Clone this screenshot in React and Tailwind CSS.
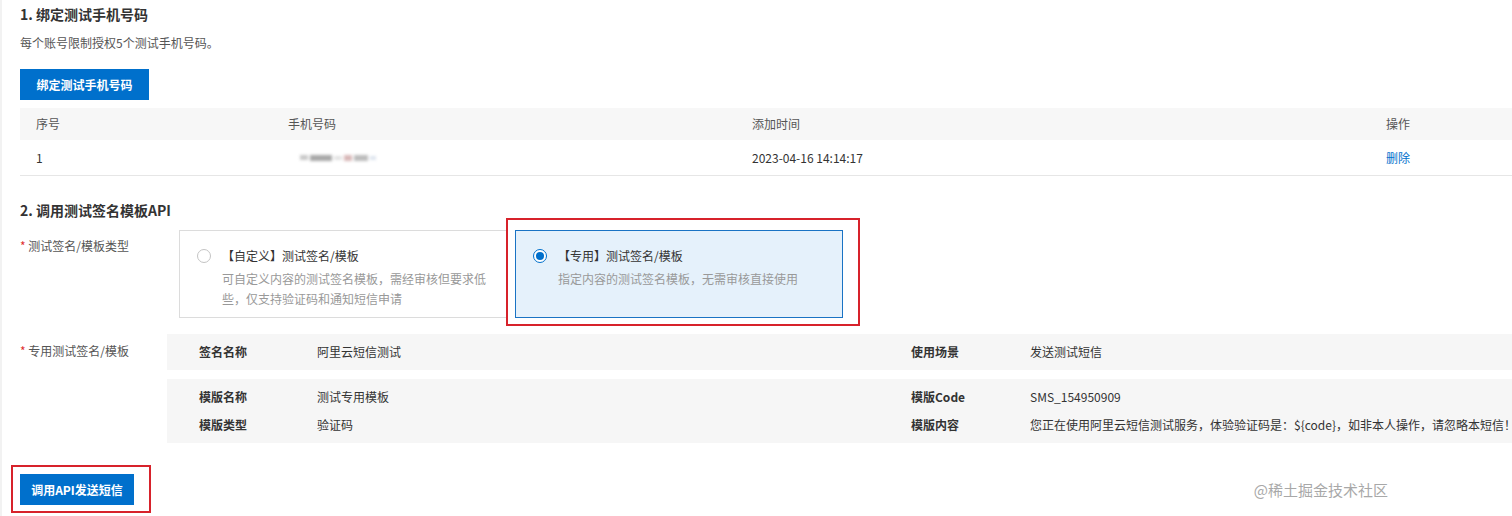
import React from "react";

const font = {
  fontFamily: '"Microsoft YaHei", "Noto Sans CJK SC", "Noto Sans", sans-serif',
};

const Radio = ({ checked }) =>
  checked ? (
    <span className="mt-[3px] flex h-[14px] w-[14px] shrink-0 items-center justify-center rounded-full border border-[#0070cc] bg-white">
      <span className="h-[8px] w-[8px] rounded-full bg-[#0070cc]" />
    </span>
  ) : (
    <span className="mt-[3px] h-[14px] w-[14px] shrink-0 rounded-full border border-[#c4c4c4] bg-white" />
  );

const InfoRow = ({ l1, v1, l2, v2 }) => (
  <div className="flex h-[28px] items-center">
    <div className="w-[118px] shrink-0 font-semibold text-[#333]">{l1}</div>
    <div className="w-[594px] shrink-0 text-[#333]">{v1}</div>
    <div className="w-[119px] shrink-0 font-semibold text-[#333]">{l2}</div>
    <div className="whitespace-nowrap text-[#333]">{v2}</div>
  </div>
);

export default function App() {
  return (
    <div
      className="relative h-[516px] w-[1512px] overflow-hidden border-l-2 border-[#f2f2f2] bg-white pl-[18px] text-[12px] text-[#333]"
      style={font}
    >
      {/* ---------- Section 1 ---------- */}
      <h3 className="pt-[4px] text-[14px] font-semibold leading-[20px] text-[#333]">
        1. 绑定测试手机号码
      </h3>
      <p className="mt-[10px] leading-[18px] text-[#555]">
        每个账号限制授权5个测试手机号码。
      </p>
      <button className="mt-[17px] h-[31px] w-[129px] bg-[#0070cc] text-[12px] font-semibold text-white">
        绑定测试手机号码
      </button>

      {/* table */}
      <div className="mt-[8px]">
        <div className="flex h-[32px] items-center bg-[#f7f7f7] text-[#555]">
          <div className="w-[252px] pl-[16px]">序号</div>
          <div className="w-[464px] pl-[16px]">手机号码</div>
          <div className="w-[634px] pl-[16px]">添加时间</div>
          <div className="pl-[16px]">操作</div>
        </div>
        <div className="flex h-[36px] items-center border-b border-[#e6e6e6]">
          <div className="w-[252px] pl-[16px]">1</div>
          <div className="w-[464px] pl-[28px]">
            <div className="flex items-center gap-[2px] blur-[1.5px]">
              <span className="h-[5px] w-[8px] bg-[#c8c8c8]" />
              <span className="h-[6px] w-[22px] bg-[#a8a8a8]" />
              <span className="h-[4px] w-[8px] bg-[#e2e2e2]" />
              <span className="h-[6px] w-[8px] bg-[#d8b8b8]" />
              <span className="h-[6px] w-[14px] bg-[#bcbcbc]" />
              <span className="h-[4px] w-[6px] bg-[#dde4ee]" />
            </div>
          </div>
          <div className="w-[634px] pl-[16px]">2023-04-16 14:14:17</div>
          <div className="pl-[16px] text-[#0070cc]">删除</div>
        </div>
      </div>

      {/* ---------- Section 2 ---------- */}
      <h3 className="mt-[24px] text-[14px] font-semibold leading-[20px] text-[#333]">
        2. 调用测试签名模板API
      </h3>

      <div className="mt-[10px] flex">
        <div className="w-[159px] shrink-0 pt-[7px] leading-[18px] text-[#555]">
          <span className="text-[#e0312f]">*</span> 测试签名/模板类型
        </div>
        <div className="flex h-[88px] w-[327px] gap-[11px] border border-r-0 border-[#dcdcdc] pl-[17px] pt-[15px]">
          <Radio />
          <div className="w-[270px]">
            <div className="leading-[20px] text-[#333]">【自定义】测试签名/模板</div>
            <div className="mt-[3px] leading-[20px] text-[#999]">
              可自定义内容的测试签名模板，需经审核但要求低些，仅支持验证码和通知短信申请
            </div>
          </div>
        </div>
        <div className="relative ml-[9px]">
          <div className="flex h-[88px] w-[328px] gap-[11px] border border-[#1a73c4] bg-[#e5f1fb] pl-[17px] pt-[15px]">
            <Radio checked />
            <div>
              <div className="leading-[20px] text-[#333]">【专用】测试签名/模板</div>
              <div className="mt-[3px] leading-[20px] text-[#999]">
                指定内容的测试签名模板，无需审核直接使用
              </div>
            </div>
          </div>
          <div className="pointer-events-none absolute -bottom-[8px] -left-[9px] -right-[17px] -top-[12px] border-2 border-[#d7222b]" />
        </div>
      </div>

      <div className="mt-[16px] flex">
        <div className="w-[147px] shrink-0 pt-[8px] leading-[18px] text-[#555]">
          <span className="text-[#e0312f]">*</span> 专用测试签名/模板
        </div>
        <div className="min-w-0 flex-1">
          <div className="bg-[#f6f6f6] py-[4px] pl-[32px]">
            <InfoRow l1="签名名称" v1="阿里云短信测试" l2="使用场景" v2="发送测试短信" />
          </div>
          <div className="mt-[9px] bg-[#f6f6f6] py-[4px] pl-[32px]">
            <InfoRow l1="模版名称" v1="测试专用模板" l2="模版Code" v2="SMS_154950909" />
            <InfoRow
              l1="模版类型"
              v1="验证码"
              l2="模版内容"
              v2="您正在使用阿里云短信测试服务，体验验证码是：${code}，如非本人操作，请忽略本短信！"
            />
          </div>
        </div>
      </div>

      <div className="relative mt-[31px] inline-block">
        <button className="h-[31px] w-[114px] bg-[#0070cc] text-[12px] font-semibold text-white">
          调用API发送短信
        </button>
        <div className="pointer-events-none absolute -bottom-[8px] -left-[9px] -right-[17px] -top-[9px] border-2 border-[#d7222b]" />
      </div>

      {/* watermark */}
      <div className="absolute right-[124px] top-[479px] text-[15px] leading-[22px] text-[#a8a8a8] [text-shadow:0_0_2px_#fff]">
        @稀土掘金技术社区
      </div>
    </div>
  );
}
